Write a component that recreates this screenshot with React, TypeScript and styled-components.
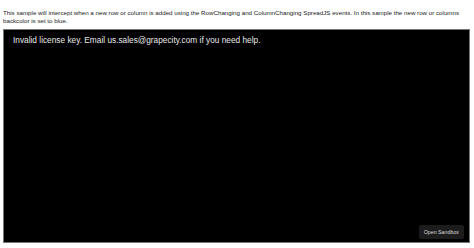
import React from "react";
import styled, { createGlobalStyle } from "styled-components";

const Global = createGlobalStyle`
  html, body { margin: 0; padding: 0; background: #fff; }
  body { font-family: "Liberation Sans", Arial, sans-serif; }
`;

const Page = styled.div`
  display: flex;
  flex-direction: column;
  padding: 9px 4px 0 3px;
  gap: 5px;
`;

const Description = styled.p`
  margin: 0;
  font-size: 6.2px;
  line-height: 7.5px;
  color: #222;
`;

const Sheet = styled.div`
  position: relative;
  height: 214px;
  background: #000;
  border: 1px solid #777;
  box-sizing: border-box;
  padding: 5px 9px;
`;

const License = styled.div`
  font-size: 8.3px;
  color: #e8e8e8;
`;

const SandboxButton = styled.button`
  position: absolute;
  right: 5px;
  bottom: 3px;
  height: 14px;
  padding: 0 5px;
  border: none;
  border-radius: 2px;
  background: #1c1c1c;
  color: #ddd;
  font-family: "Liberation Sans", Arial, sans-serif;
  font-size: 5.3px;
`;

export default function App() {
  return (
    <>
      <Global />
      <Page>
        <Description>
          This sample will intercept when a new row or column is added using the RowChanging and ColumnChanging SpreadJS events. In this sample the new row or columns backcolor is set to blue.
        </Description>
        <Sheet>
          <License>Invalid license key. Email us.sales@grapecity.com if you need help.</License>
          <SandboxButton>Open Sandbox</SandboxButton>
        </Sheet>
      </Page>
    </>
  );
}
